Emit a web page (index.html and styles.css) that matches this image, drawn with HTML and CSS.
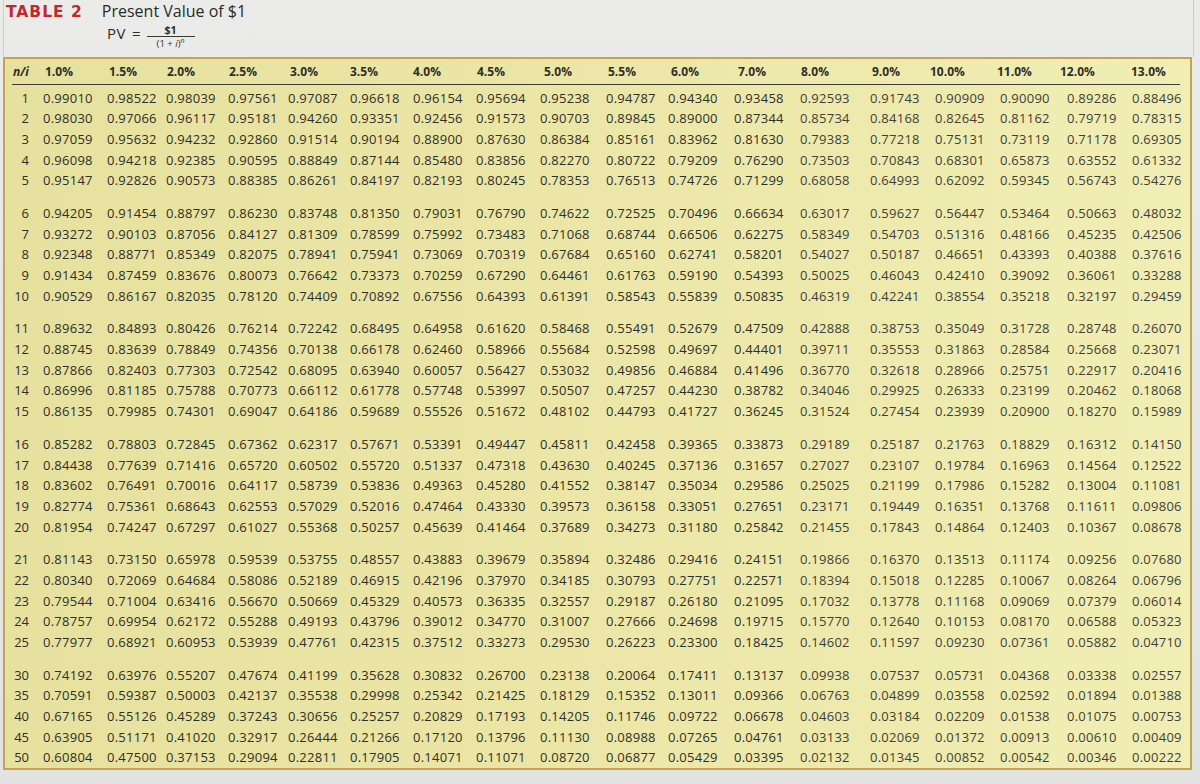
FILE: index.html
```html
<!DOCTYPE html>
<html lang="en">
<head>
<meta charset="utf-8">
<title>Table 2 – Present Value of $1</title>
<link rel="stylesheet" href="styles.css">
</head>
<body>
<div class="page">
  <header class="head">
    <div class="title"><span class="tag">TABLE 2</span><span class="name">Present Value of $1</span></div>
    <div class="formula">
      <span class="pv">PV</span><span class="eq">=</span>
      <span class="frac"><span class="num">$1</span><span class="den">(1 + <i>i</i>)<sup><i>n</i></sup></span></span>
    </div>
  </header>
  <section class="box">
    <div class="hrow">
      <span class="ni">n/i</span><span>1.0%</span><span>1.5%</span><span>2.0%</span><span>2.5%</span><span>3.0%</span><span>3.5%</span><span>4.0%</span><span>4.5%</span><span>5.0%</span><span>5.5%</span><span>6.0%</span><span>7.0%</span><span>8.0%</span><span>9.0%</span><span>10.0%</span><span>11.0%</span><span>12.0%</span><span>13.0%</span>
    </div>
    <div class="rows">
      <div class="group">
        <div class="row"><span class="n">1</span><span>0.99010</span><span>0.98522</span><span>0.98039</span><span>0.97561</span><span>0.97087</span><span>0.96618</span><span>0.96154</span><span>0.95694</span><span>0.95238</span><span>0.94787</span><span>0.94340</span><span>0.93458</span><span>0.92593</span><span>0.91743</span><span>0.90909</span><span>0.90090</span><span>0.89286</span><span>0.88496</span></div>
        <div class="row"><span class="n">2</span><span>0.98030</span><span>0.97066</span><span>0.96117</span><span>0.95181</span><span>0.94260</span><span>0.93351</span><span>0.92456</span><span>0.91573</span><span>0.90703</span><span>0.89845</span><span>0.89000</span><span>0.87344</span><span>0.85734</span><span>0.84168</span><span>0.82645</span><span>0.81162</span><span>0.79719</span><span>0.78315</span></div>
        <div class="row"><span class="n">3</span><span>0.97059</span><span>0.95632</span><span>0.94232</span><span>0.92860</span><span>0.91514</span><span>0.90194</span><span>0.88900</span><span>0.87630</span><span>0.86384</span><span>0.85161</span><span>0.83962</span><span>0.81630</span><span>0.79383</span><span>0.77218</span><span>0.75131</span><span>0.73119</span><span>0.71178</span><span>0.69305</span></div>
        <div class="row"><span class="n">4</span><span>0.96098</span><span>0.94218</span><span>0.92385</span><span>0.90595</span><span>0.88849</span><span>0.87144</span><span>0.85480</span><span>0.83856</span><span>0.82270</span><span>0.80722</span><span>0.79209</span><span>0.76290</span><span>0.73503</span><span>0.70843</span><span>0.68301</span><span>0.65873</span><span>0.63552</span><span>0.61332</span></div>
        <div class="row"><span class="n">5</span><span>0.95147</span><span>0.92826</span><span>0.90573</span><span>0.88385</span><span>0.86261</span><span>0.84197</span><span>0.82193</span><span>0.80245</span><span>0.78353</span><span>0.76513</span><span>0.74726</span><span>0.71299</span><span>0.68058</span><span>0.64993</span><span>0.62092</span><span>0.59345</span><span>0.56743</span><span>0.54276</span></div>
      </div>
      <div class="group">
        <div class="row"><span class="n">6</span><span>0.94205</span><span>0.91454</span><span>0.88797</span><span>0.86230</span><span>0.83748</span><span>0.81350</span><span>0.79031</span><span>0.76790</span><span>0.74622</span><span>0.72525</span><span>0.70496</span><span>0.66634</span><span>0.63017</span><span>0.59627</span><span>0.56447</span><span>0.53464</span><span>0.50663</span><span>0.48032</span></div>
        <div class="row"><span class="n">7</span><span>0.93272</span><span>0.90103</span><span>0.87056</span><span>0.84127</span><span>0.81309</span><span>0.78599</span><span>0.75992</span><span>0.73483</span><span>0.71068</span><span>0.68744</span><span>0.66506</span><span>0.62275</span><span>0.58349</span><span>0.54703</span><span>0.51316</span><span>0.48166</span><span>0.45235</span><span>0.42506</span></div>
        <div class="row"><span class="n">8</span><span>0.92348</span><span>0.88771</span><span>0.85349</span><span>0.82075</span><span>0.78941</span><span>0.75941</span><span>0.73069</span><span>0.70319</span><span>0.67684</span><span>0.65160</span><span>0.62741</span><span>0.58201</span><span>0.54027</span><span>0.50187</span><span>0.46651</span><span>0.43393</span><span>0.40388</span><span>0.37616</span></div>
        <div class="row"><span class="n">9</span><span>0.91434</span><span>0.87459</span><span>0.83676</span><span>0.80073</span><span>0.76642</span><span>0.73373</span><span>0.70259</span><span>0.67290</span><span>0.64461</span><span>0.61763</span><span>0.59190</span><span>0.54393</span><span>0.50025</span><span>0.46043</span><span>0.42410</span><span>0.39092</span><span>0.36061</span><span>0.33288</span></div>
        <div class="row"><span class="n">10</span><span>0.90529</span><span>0.86167</span><span>0.82035</span><span>0.78120</span><span>0.74409</span><span>0.70892</span><span>0.67556</span><span>0.64393</span><span>0.61391</span><span>0.58543</span><span>0.55839</span><span>0.50835</span><span>0.46319</span><span>0.42241</span><span>0.38554</span><span>0.35218</span><span>0.32197</span><span>0.29459</span></div>
      </div>
      <div class="group">
        <div class="row"><span class="n">11</span><span>0.89632</span><span>0.84893</span><span>0.80426</span><span>0.76214</span><span>0.72242</span><span>0.68495</span><span>0.64958</span><span>0.61620</span><span>0.58468</span><span>0.55491</span><span>0.52679</span><span>0.47509</span><span>0.42888</span><span>0.38753</span><span>0.35049</span><span>0.31728</span><span>0.28748</span><span>0.26070</span></div>
        <div class="row"><span class="n">12</span><span>0.88745</span><span>0.83639</span><span>0.78849</span><span>0.74356</span><span>0.70138</span><span>0.66178</span><span>0.62460</span><span>0.58966</span><span>0.55684</span><span>0.52598</span><span>0.49697</span><span>0.44401</span><span>0.39711</span><span>0.35553</span><span>0.31863</span><span>0.28584</span><span>0.25668</span><span>0.23071</span></div>
        <div class="row"><span class="n">13</span><span>0.87866</span><span>0.82403</span><span>0.77303</span><span>0.72542</span><span>0.68095</span><span>0.63940</span><span>0.60057</span><span>0.56427</span><span>0.53032</span><span>0.49856</span><span>0.46884</span><span>0.41496</span><span>0.36770</span><span>0.32618</span><span>0.28966</span><span>0.25751</span><span>0.22917</span><span>0.20416</span></div>
        <div class="row"><span class="n">14</span><span>0.86996</span><span>0.81185</span><span>0.75788</span><span>0.70773</span><span>0.66112</span><span>0.61778</span><span>0.57748</span><span>0.53997</span><span>0.50507</span><span>0.47257</span><span>0.44230</span><span>0.38782</span><span>0.34046</span><span>0.29925</span><span>0.26333</span><span>0.23199</span><span>0.20462</span><span>0.18068</span></div>
        <div class="row"><span class="n">15</span><span>0.86135</span><span>0.79985</span><span>0.74301</span><span>0.69047</span><span>0.64186</span><span>0.59689</span><span>0.55526</span><span>0.51672</span><span>0.48102</span><span>0.44793</span><span>0.41727</span><span>0.36245</span><span>0.31524</span><span>0.27454</span><span>0.23939</span><span>0.20900</span><span>0.18270</span><span>0.15989</span></div>
      </div>
      <div class="group">
        <div class="row"><span class="n">16</span><span>0.85282</span><span>0.78803</span><span>0.72845</span><span>0.67362</span><span>0.62317</span><span>0.57671</span><span>0.53391</span><span>0.49447</span><span>0.45811</span><span>0.42458</span><span>0.39365</span><span>0.33873</span><span>0.29189</span><span>0.25187</span><span>0.21763</span><span>0.18829</span><span>0.16312</span><span>0.14150</span></div>
        <div class="row"><span class="n">17</span><span>0.84438</span><span>0.77639</span><span>0.71416</span><span>0.65720</span><span>0.60502</span><span>0.55720</span><span>0.51337</span><span>0.47318</span><span>0.43630</span><span>0.40245</span><span>0.37136</span><span>0.31657</span><span>0.27027</span><span>0.23107</span><span>0.19784</span><span>0.16963</span><span>0.14564</span><span>0.12522</span></div>
        <div class="row"><span class="n">18</span><span>0.83602</span><span>0.76491</span><span>0.70016</span><span>0.64117</span><span>0.58739</span><span>0.53836</span><span>0.49363</span><span>0.45280</span><span>0.41552</span><span>0.38147</span><span>0.35034</span><span>0.29586</span><span>0.25025</span><span>0.21199</span><span>0.17986</span><span>0.15282</span><span>0.13004</span><span>0.11081</span></div>
        <div class="row"><span class="n">19</span><span>0.82774</span><span>0.75361</span><span>0.68643</span><span>0.62553</span><span>0.57029</span><span>0.52016</span><span>0.47464</span><span>0.43330</span><span>0.39573</span><span>0.36158</span><span>0.33051</span><span>0.27651</span><span>0.23171</span><span>0.19449</span><span>0.16351</span><span>0.13768</span><span>0.11611</span><span>0.09806</span></div>
        <div class="row"><span class="n">20</span><span>0.81954</span><span>0.74247</span><span>0.67297</span><span>0.61027</span><span>0.55368</span><span>0.50257</span><span>0.45639</span><span>0.41464</span><span>0.37689</span><span>0.34273</span><span>0.31180</span><span>0.25842</span><span>0.21455</span><span>0.17843</span><span>0.14864</span><span>0.12403</span><span>0.10367</span><span>0.08678</span></div>
      </div>
      <div class="group">
        <div class="row"><span class="n">21</span><span>0.81143</span><span>0.73150</span><span>0.65978</span><span>0.59539</span><span>0.53755</span><span>0.48557</span><span>0.43883</span><span>0.39679</span><span>0.35894</span><span>0.32486</span><span>0.29416</span><span>0.24151</span><span>0.19866</span><span>0.16370</span><span>0.13513</span><span>0.11174</span><span>0.09256</span><span>0.07680</span></div>
        <div class="row"><span class="n">22</span><span>0.80340</span><span>0.72069</span><span>0.64684</span><span>0.58086</span><span>0.52189</span><span>0.46915</span><span>0.42196</span><span>0.37970</span><span>0.34185</span><span>0.30793</span><span>0.27751</span><span>0.22571</span><span>0.18394</span><span>0.15018</span><span>0.12285</span><span>0.10067</span><span>0.08264</span><span>0.06796</span></div>
        <div class="row"><span class="n">23</span><span>0.79544</span><span>0.71004</span><span>0.63416</span><span>0.56670</span><span>0.50669</span><span>0.45329</span><span>0.40573</span><span>0.36335</span><span>0.32557</span><span>0.29187</span><span>0.26180</span><span>0.21095</span><span>0.17032</span><span>0.13778</span><span>0.11168</span><span>0.09069</span><span>0.07379</span><span>0.06014</span></div>
        <div class="row"><span class="n">24</span><span>0.78757</span><span>0.69954</span><span>0.62172</span><span>0.55288</span><span>0.49193</span><span>0.43796</span><span>0.39012</span><span>0.34770</span><span>0.31007</span><span>0.27666</span><span>0.24698</span><span>0.19715</span><span>0.15770</span><span>0.12640</span><span>0.10153</span><span>0.08170</span><span>0.06588</span><span>0.05323</span></div>
        <div class="row"><span class="n">25</span><span>0.77977</span><span>0.68921</span><span>0.60953</span><span>0.53939</span><span>0.47761</span><span>0.42315</span><span>0.37512</span><span>0.33273</span><span>0.29530</span><span>0.26223</span><span>0.23300</span><span>0.18425</span><span>0.14602</span><span>0.11597</span><span>0.09230</span><span>0.07361</span><span>0.05882</span><span>0.04710</span></div>
      </div>
      <div class="group">
        <div class="row"><span class="n">30</span><span>0.74192</span><span>0.63976</span><span>0.55207</span><span>0.47674</span><span>0.41199</span><span>0.35628</span><span>0.30832</span><span>0.26700</span><span>0.23138</span><span>0.20064</span><span>0.17411</span><span>0.13137</span><span>0.09938</span><span>0.07537</span><span>0.05731</span><span>0.04368</span><span>0.03338</span><span>0.02557</span></div>
        <div class="row"><span class="n">35</span><span>0.70591</span><span>0.59387</span><span>0.50003</span><span>0.42137</span><span>0.35538</span><span>0.29998</span><span>0.25342</span><span>0.21425</span><span>0.18129</span><span>0.15352</span><span>0.13011</span><span>0.09366</span><span>0.06763</span><span>0.04899</span><span>0.03558</span><span>0.02592</span><span>0.01894</span><span>0.01388</span></div>
        <div class="row"><span class="n">40</span><span>0.67165</span><span>0.55126</span><span>0.45289</span><span>0.37243</span><span>0.30656</span><span>0.25257</span><span>0.20829</span><span>0.17193</span><span>0.14205</span><span>0.11746</span><span>0.09722</span><span>0.06678</span><span>0.04603</span><span>0.03184</span><span>0.02209</span><span>0.01538</span><span>0.01075</span><span>0.00753</span></div>
        <div class="row"><span class="n">45</span><span>0.63905</span><span>0.51171</span><span>0.41020</span><span>0.32917</span><span>0.26444</span><span>0.21266</span><span>0.17120</span><span>0.13796</span><span>0.11130</span><span>0.08988</span><span>0.07265</span><span>0.04761</span><span>0.03133</span><span>0.02069</span><span>0.01372</span><span>0.00913</span><span>0.00610</span><span>0.00409</span></div>
        <div class="row"><span class="n">50</span><span>0.60804</span><span>0.47500</span><span>0.37153</span><span>0.29094</span><span>0.22811</span><span>0.17905</span><span>0.14071</span><span>0.11071</span><span>0.08720</span><span>0.06877</span><span>0.05429</span><span>0.03395</span><span>0.02132</span><span>0.01345</span><span>0.00852</span><span>0.00542</span><span>0.00346</span><span>0.00222</span></div>
      </div>
    </div>
  </section>
</div>
</body>
</html>
```

FILE: styles.css
```css
html, body {
  margin: 0;
  padding: 0;
}

body {
  width: 1200px;
  height: 784px;
  overflow: hidden;
  background: #dcdcda;
  font-family: "Open Sans", "Liberation Sans", sans-serif;
  color: #2f2f29;
}

.page {
  width: 1200px;
  height: 784px;
  background: linear-gradient(to bottom, #ebebe9 0%, #e6e6e4 60%, #e2e2e0 100%);
}

/* ---------- heading ---------- */
.head {
  height: 57px;
  box-sizing: border-box;
  margin: 0 6px 0 3px;
  padding: 0 0 0 2px;
  border-left: 1px solid #d4d0c2;
  border-right: 1px solid #cfcabb;
}

.title {
  display: flex;
  align-items: baseline;
  gap: 19px;
  height: 22px;
  line-height: 22px;
}

.tag {
  font-family: "DejaVu Sans", "Open Sans", sans-serif;
  font-weight: 700;
  font-size: 15.5px;
  letter-spacing: 1px;
  color: #c4262e;
}

.name {
  font-size: 16px;
  color: #2b2b27;
}

.formula {
  display: flex;
  align-items: flex-start;
  margin: 3px 0 0 101px;
}

.pv {
  font-size: 15px;
  line-height: 17px;
  letter-spacing: 0.5px;
  color: #2b2b27;
}

.eq {
  font-size: 15px;
  line-height: 17px;
  margin: 0 6px 0 6px;
  color: #2b2b27;
}

.frac {
  display: flex;
  flex-direction: column;
  align-items: center;
  width: 48px;
}

.num {
  display: block;
  width: 100%;
  text-align: center;
  font-size: 10.5px;
  font-weight: 700;
  line-height: 10px;
  padding-bottom: 1px;
  border-bottom: 1px solid #3a3a33;
}

.den {
  display: block;
  font-size: 9.5px;
  line-height: 12px;
  margin-top: 1px;
  color: #33332d;
}

.den sup {
  font-size: 7px;
  vertical-align: 4px;
  line-height: 0;
}

/* ---------- table box ---------- */
.box {
  margin: 0 8px 0 3px;
  border: 2px solid #c7a34f;
  background: linear-gradient(to right, #e6e19e 0%, #ebe6a6 45%, #f1eeb5 100%);
}

.hrow,
.row {
  display: grid;
}

.hrow {
  grid-template-columns: 40px 64px 58px 62px 61px 60px 63px 64px 67px 64px 63px 67px 63px 71px 58px 67px 63px 71px 1fr;
  height: 25px;
  align-items: center;
  font-size: 12px;
  font-weight: 700;
  color: #2e2e28;
}

.hrow .ni {
  padding-left: 8px;
  font-style: italic;
}

.rows {
  margin: 0 10px 0 7px;
  border-top: 1.5px solid #3d3c32;
  padding-top: 2.5px;
}

.group + .group {
  margin-top: 12px;
}

.row {
  grid-template-columns: 38px 64px 59px 62px 60px 62px 63px 63px 64px 66px 62px 66px 66px 70px 65px 65px 67px 65px 1fr;
  margin-left: -7px;
  height: 20.7px;
  line-height: 20.7px;
  font-size: 13px;
  letter-spacing: 0.25px;
  white-space: nowrap;
  color: #2f2f29;
}

.row span:nth-child(n+14) {
  color: #3f3f37;
}

.row .n {
  text-align: right;
  padding-right: 14px;
  letter-spacing: 0;
}
```
